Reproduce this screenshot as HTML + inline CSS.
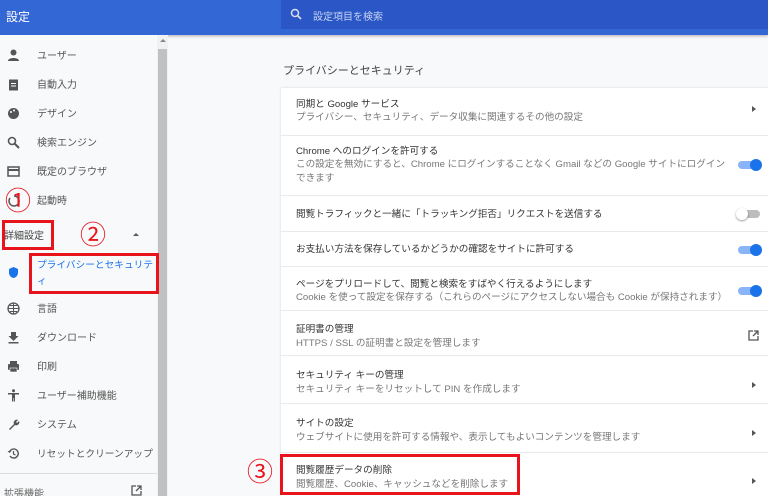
<!DOCTYPE html>
<html><head><meta charset="utf-8"><style>
*{margin:0;padding:0;box-sizing:border-box}
html,body{width:768px;height:496px;overflow:hidden}
body{background:#f8f9fa;font-family:"Liberation Sans","Noto Sans CJK JP",sans-serif;position:relative;color:#333}
.hdr{position:absolute;left:0;top:0;width:768px;height:35px;background:#3367d6;box-shadow:0 1px 3px rgba(0,0,0,.3)}
.hdr .t{position:absolute;left:6px;top:8px;color:#fff;font-size:12px}
.srch{position:absolute;left:281px;top:0;width:487px;height:29px;background:#2a56c6}
.srch span{position:absolute;left:32px;top:8px;color:#c8d4f0;font-size:10px}
.side{position:absolute;left:0;top:35px;width:157px;height:461px;background:#f8f9fa}
.it{position:absolute;left:37px;font-size:10px;line-height:14px;color:#555;white-space:nowrap;margin-top:2px}
.ic{position:absolute;left:7px;width:13px;height:13px;margin-top:1px}
.sb{position:absolute;left:157px;top:35px;width:11px;height:461px;background:#f1f1f1}
.sb div{position:absolute;left:1px;top:14px;width:9px;height:447px;background:#c1c1c1}
.h2{position:absolute;left:283px;top:62px;font-size:11px;color:#444}
.card{position:absolute;left:281px;top:88px;width:487px;height:408px;background:#fff;box-shadow:0 0 2px rgba(0,0,0,.15)}
.row{position:absolute;left:0;width:487px;border-top:1px solid #eaeaea}
.row .a{position:absolute;left:15px;font-size:9.6px;line-height:14px;color:#333;white-space:nowrap;margin-top:2px}
.row .b{position:absolute;left:15px;font-size:9.6px;color:#777;white-space:nowrap;line-height:14px;margin-top:1px}
.arr{position:absolute;left:471px;width:0;height:0;border-top:3px solid transparent;border-bottom:3px solid transparent;border-left:4px solid #555}
.tg{position:absolute;left:457px;width:22px;height:8px;border-radius:4px;background:#8ab4f8}
.tg i{position:absolute;right:-2px;top:-2px;width:12px;height:12px;border-radius:50%;background:#1a73e8}
.tg.off{background:#bdbdbd}.tg.off i{left:-2px;right:auto;background:#fff;box-shadow:0 1px 2px rgba(0,0,0,.4)}
.red{position:absolute;border:3px solid #e8141c}
.num{position:absolute;color:#e8141c;font-size:26px;line-height:26px}
</style></head><body>
<div class="hdr"><div class="t">設定</div>
<div class="srch"><svg style="position:absolute;left:9px;top:8px" width="12" height="12" viewBox="0 0 12 12"><circle cx="5" cy="5" r="3.5" fill="none" stroke="#dde" stroke-width="1.5"/><path d="M7.5 7.5L11 11" stroke="#dde" stroke-width="1.6"/></svg><span>設定項目を検索</span></div></div>
<div class="side">
<svg class="ic" style="top:13px" viewBox="0 0 13 13"><circle cx="6.5" cy="3.5" r="3" fill="#555"/><path d="M1 12c0-4 11-4 11 0z" fill="#555"/></svg><div class="it" style="top:13px">ユーザー</div>
<svg class="ic" style="top:42px" viewBox="0 0 13 13"><rect x="2" y="1.5" width="9" height="11" fill="#555"/><rect x="4" y="5" width="5" height="1" fill="#fff"/><rect x="4" y="7.5" width="5" height="1" fill="#fff"/></svg><div class="it" style="top:42px">自動入力</div>
<svg class="ic" style="top:71px" viewBox="0 0 13 13"><circle cx="6.5" cy="6.5" r="5.5" fill="#555"/><circle cx="4" cy="5" r="1" fill="#fff"/><circle cx="7" cy="3.5" r="1" fill="#fff"/></svg><div class="it" style="top:71px">デザイン</div>
<svg class="ic" style="top:100px" viewBox="0 0 13 13"><circle cx="5" cy="5" r="3.5" fill="none" stroke="#555" stroke-width="1.6"/><path d="M7.5 7.5L12 12" stroke="#555" stroke-width="2"/></svg><div class="it" style="top:100px">検索エンジン</div>
<svg class="ic" style="top:129px" viewBox="0 0 13 13"><rect x="1" y="2" width="11" height="9" fill="none" stroke="#555" stroke-width="1.5"/><rect x="1" y="4" width="11" height="2" fill="#555"/></svg><div class="it" style="top:129px">既定のブラウザ</div>
<svg class="ic" style="top:158px" viewBox="0 0 13 13"><path d="M3 4a5 5 0 1 0 4-2" fill="none" stroke="#555" stroke-width="1.5"/></svg><div class="it" style="top:158px">起動時</div>
<div class="it" style="left:4px;top:193px;color:#444">詳細設定</div>
<div style="position:absolute;left:133px;top:198px;border-left:3px solid transparent;border-right:3px solid transparent;border-bottom:3px solid #555"></div>
<svg class="ic" style="top:230px" viewBox="0 0 13 13"><path d="M6.5 1L2 3v3.5c0 3 2 5 4.5 5.5 2.5-.5 4.5-2.5 4.5-5.5V3z" fill="#1a73e8"/></svg>
<div class="it" style="top:221px;color:#1a73e8;line-height:16px;font-size:9.7px">プライバシーとセキュリテ<br>ィ</div>
<svg class="ic" style="top:266px" viewBox="0 0 13 13"><circle cx="6.5" cy="6.5" r="5.5" fill="none" stroke="#555" stroke-width="1.3"/><path d="M1 6.5h11M6.5 1v11M3 3.5h7M3 9.5h7" stroke="#555" stroke-width="1"/></svg><div class="it" style="top:266px">言語</div>
<svg class="ic" style="top:295px" viewBox="0 0 13 13"><path d="M4 1h5v4h2.5L6.5 10 1.5 5H4z" fill="#555"/><rect x="1.5" y="11" width="10" height="1.5" fill="#555"/></svg><div class="it" style="top:295px">ダウンロード</div>
<svg class="ic" style="top:324px" viewBox="0 0 13 13"><rect x="3" y="1" width="7" height="3" fill="#555"/><rect x="1" y="4" width="11" height="6" rx="1" fill="#555"/><rect x="3" y="8" width="7" height="4" fill="#555" stroke="#fff" stroke-width=".6"/></svg><div class="it" style="top:324px">印刷</div>
<svg class="ic" style="top:353px" viewBox="0 0 13 13"><circle cx="6.5" cy="1.8" r="1.5" fill="#555"/><path d="M1 4h11v1.5H8v7H6.8V9H6.2v3.5H5v-7H1z" fill="#555"/></svg><div class="it" style="top:353px">ユーザー補助機能</div>
<svg class="ic" style="top:382px" viewBox="0 0 13 13"><path d="M2 11l5-5a3 3 0 0 1 4-4l-2 2 1 1 2-2a3 3 0 0 1-4 4l-5 5z" fill="#555"/></svg><div class="it" style="top:382px">システム</div>
<svg class="ic" style="top:411px" viewBox="0 0 13 13"><path d="M2.5 5a4.5 4.5 0 1 1 .5 4" fill="none" stroke="#555" stroke-width="1.4"/><path d="M6.5 4v3l2 1" fill="none" stroke="#555" stroke-width="1.2"/><path d="M0.5 4l2 2 2-2z" fill="#555"/></svg><div class="it" style="top:411px;font-size:9.7px">リセットとクリーンアップ</div>
<div style="position:absolute;left:0;top:438px;width:157px;border-top:1px solid #ddd"></div>
<div class="it" style="left:4px;top:451px;color:#666">拡張機能</div>
<svg style="position:absolute;left:131px;top:450px" width="11" height="11" viewBox="0 0 11 11"><path d="M5 1H1v9h9V6M6 1h4v4M10 1L5 6" fill="none" stroke="#555" stroke-width="1.3"/></svg>
</div>
<div class="sb"><div></div><i style="position:absolute;left:3px;top:4px;border-left:3px solid transparent;border-right:3px solid transparent;border-bottom:3px solid #888"></i></div>
<div class="h2">プライバシーとセキュリティ</div>
<div class="card">
<div class="row" style="top:0;height:47px;border:0"><div class="a" style="top:8px">同期と Google サービス</div><div class="b" style="top:22px">プライバシー、セキュリティ、データ収集に関連するその他の設定</div><div class="arr" style="top:18px"></div></div>
<div class="row" style="top:47px;height:60px"><div class="a" style="top:7px">Chrome へのログインを許可する</div><div class="b" style="top:21px">この設定を無効にすると、Chrome にログインすることなく Gmail などの Google サイトにログイン<br>できます</div><div class="tg" style="top:25px"><i></i></div></div>
<div class="row" style="top:107px;height:36px"><div class="a" style="top:10px">閲覧トラフィックと一緒に「トラッキング拒否」リクエストを送信する</div><div class="tg off" style="top:14px"><i></i></div></div>
<div class="row" style="top:143px;height:35px"><div class="a" style="top:9px">お支払い方法を保存しているかどうかの確認をサイトに許可する</div><div class="tg" style="top:14px"><i></i></div></div>
<div class="row" style="top:178px;height:44px"><div class="a" style="top:9px">ページをプリロードして、閲覧と検索をすばやく行えるようにします</div><div class="b" style="top:23px">Cookie を使って設定を保存する（これらのページにアクセスしない場合も Cookie が保持されます）</div><div class="tg" style="top:20px"><i></i></div></div>
<div class="row" style="top:222px;height:45px"><div class="a" style="top:10px">証明書の管理</div><div class="b" style="top:25px">HTTPS / SSL の証明書と設定を管理します</div><svg style="position:absolute;left:467px;top:19px" width="11" height="11" viewBox="0 0 11 11"><path d="M5 1H1v9h9V6M6 1h4v4M10 1L5 6" fill="none" stroke="#555" stroke-width="1.3"/></svg></div>
<div class="row" style="top:267px;height:48px"><div class="a" style="top:11px">セキュリティ キーの管理</div><div class="b" style="top:26px">セキュリティ キーをリセットして PIN を作成します</div><div class="arr" style="top:26px"></div></div>
<div class="row" style="top:315px;height:49px"><div class="a" style="top:11px">サイトの設定</div><div class="b" style="top:26px">ウェブサイトに使用を許可する情報や、表示してもよいコンテンツを管理します</div><div class="arr" style="top:26px"></div></div>
<div class="row" style="top:364px;height:44px"><div class="a" style="top:9px">閲覧履歴データの削除</div><div class="b" style="top:24px">閲覧履歴、Cookie、キャッシュなどを削除します</div><div class="arr" style="top:25px"></div></div>
</div>
<div class="red" style="left:2px;top:220px;width:52px;height:30px"></div>
<div class="red" style="left:29px;top:253px;width:130px;height:41px"></div>
<div class="red" style="left:280px;top:454px;width:240px;height:41px"></div>
<div class="num" style="left:5px;top:188px">①</div>
<div class="num" style="left:80px;top:222px">②</div>
<div class="num" style="left:247px;top:459px">③</div>
</body></html>
